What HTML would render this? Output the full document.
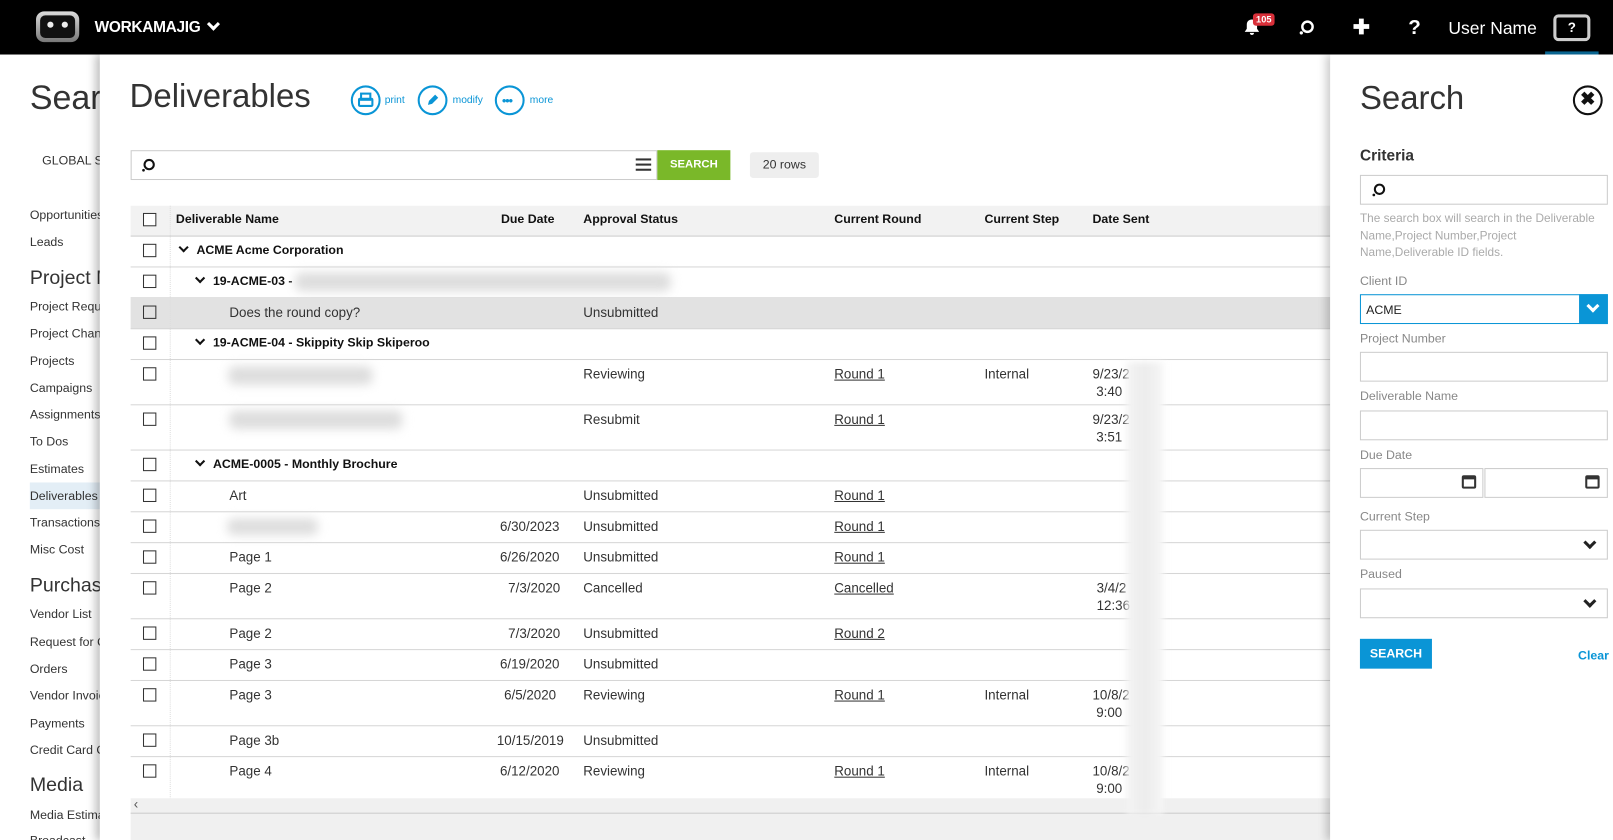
<!DOCTYPE html>
<html><head><meta charset="utf-8"><style>
*{box-sizing:border-box;margin:0;padding:0}
body{width:1613px;height:840px;overflow:hidden;background:#fff;font-family:"Liberation Sans",sans-serif;color:#333}
#w{position:absolute;left:0;top:0;width:1568px;height:817px;transform:scale(1.0287);transform-origin:0 0;overflow:hidden}
.a{position:absolute;white-space:nowrap}
.top{position:absolute;left:0;top:0;width:1568px;height:53px;background:#000}
.lt{font-size:12px;color:#333}
.lh{font-size:19px;color:#333}
.main{position:absolute;left:97px;top:53px;width:1196px;height:764px;background:#fff;box-shadow:-4px 0 8px rgba(0,0,0,.25)}
.rp{position:absolute;left:1293px;top:53px;width:275px;height:764px;background:#fff;box-shadow:-4px 0 8px rgba(0,0,0,.2)}
.row{position:absolute;left:127px;width:1166px;border-bottom:1px solid #d6d6d6;font-size:13px}
.cb{position:absolute;left:12px;top:7px;width:13px;height:13px;border:1.5px solid #333;background:#fff}
.t{position:absolute;top:6px;white-space:nowrap}
.b{font-weight:bold;font-size:12px;color:#111}
.u{text-decoration:underline}
.chev{display:inline-block;width:7px;height:7px;border-right:2.5px solid #111;border-bottom:2.5px solid #111;transform:rotate(45deg);margin-right:9px;position:relative;top:-3px}
.blur{position:absolute;background:#ddd;filter:blur(5px);border-radius:6px}
.lbl{position:absolute;left:1322px;font-size:12px;color:#888}
.inp{position:absolute;left:1322px;width:241px;height:29px;border:1px solid #ccc;background:#fff}
.ic{position:absolute;width:29px;height:29px;border:2px solid #0a95d6;border-radius:50%}
.icl{position:absolute;font-size:10px;color:#0a95d6}
.dd{position:absolute;right:12px;top:7px;width:9px;height:9px;border-right:3px solid #222;border-bottom:3px solid #222;transform:rotate(45deg)}
</style></head><body><div id="w">
<div class="top">
 <div class="a" style="left:35px;top:11px;width:42px;height:30px;border-radius:8px;background:linear-gradient(#ddd,#777);"></div>
 <div class="a" style="left:39px;top:15px;width:34px;height:22px;border-radius:5px;background:#111"></div>
 <div class="a" style="left:46px;top:21px;width:6px;height:6px;border-radius:50%;background:#eee"></div>
 <div class="a" style="left:60px;top:21px;width:6px;height:6px;border-radius:50%;background:#eee"></div>
 <div class="a" style="left:92px;top:18px;color:#fff;font-weight:bold;font-size:15px;letter-spacing:-0.3px">WORKAMAJIG</div>
 <div class="a" style="left:203px;top:19px;width:9px;height:9px;border-right:3px solid #fff;border-bottom:3px solid #fff;transform:rotate(45deg)"></div>
 <svg class="a" style="left:1207px;top:17px" width="20" height="20" viewBox="0 0 20 20"><path d="M10 2c-3 0-5 2-5 5v4l-2 3h14l-2-3V7c0-3-2-5-5-5zM8 15a2 2 0 0 0 4 0z" fill="#fff"/></svg>
 <div class="a" style="left:1218px;top:13px;background:#d9303a;color:#fff;font-size:9px;font-weight:bold;padding:0 3px;border-radius:3px;line-height:12px">105</div>
 <svg class="a" style="left:1261px;top:18px" width="18" height="18" viewBox="0 0 18 18"><circle cx="10" cy="8" r="5" fill="none" stroke="#fff" stroke-width="2.4"/><circle cx="4" cy="14" r="1.6" fill="#fff"/></svg>
 <div class="a" style="left:1315px;top:19px;width:16px;height:16px;color:#fff;font-size:20px;font-weight:bold;line-height:16px">✚</div>
 <div class="a" style="left:1369px;top:16px;color:#fff;font-size:20px;font-weight:bold">?</div>
 <div class="a" style="left:1408px;top:18px;color:#fff;font-size:17px">User Name</div>
 <div class="a" style="left:1510px;top:14px;width:36px;height:26px;border:3px solid #ccc;border-radius:5px;color:#fff;font-size:13px;font-weight:bold;text-align:center;line-height:19px">?</div>
 <div class="a" style="left:1502px;top:50px;width:52px;height:3px;background:#0a6e9c"></div>
</div>
<div class="a" style="left:29px;top:76px;font-size:33px;color:#333">Search</div>
<div class="a lt" style="left:41px;top:149px">GLOBAL SEARCH</div>
<div class="a lt" style="left:29px;top:202px">Opportunities</div>
<div class="a lt" style="left:29px;top:228px">Leads</div>
<div class="a lh" style="left:29px;top:260px">Project Management</div>
<div class="a lt" style="left:29px;top:291px">Project Requests</div>
<div class="a lt" style="left:29px;top:317px">Project Changes</div>
<div class="a lt" style="left:29px;top:344px">Projects</div>
<div class="a lt" style="left:29px;top:370px">Campaigns</div>
<div class="a lt" style="left:29px;top:396px">Assignments</div>
<div class="a lt" style="left:29px;top:422px">To Dos</div>
<div class="a lt" style="left:29px;top:449px">Estimates</div>
<div class="a" style="left:29px;top:469px;width:70px;height:26px;background:#e3eef6"></div>
<div class="a lt" style="left:29px;top:475px">Deliverables</div>
<div class="a lt" style="left:29px;top:501px">Transactions</div>
<div class="a lt" style="left:29px;top:527px">Misc Cost</div>
<div class="a lh" style="left:29px;top:559px">Purchasing</div>
<div class="a lt" style="left:29px;top:590px">Vendor List</div>
<div class="a lt" style="left:29px;top:617px">Request for Quote</div>
<div class="a lt" style="left:29px;top:643px">Orders</div>
<div class="a lt" style="left:29px;top:669px">Vendor Invoices</div>
<div class="a lt" style="left:29px;top:696px">Payments</div>
<div class="a lt" style="left:29px;top:722px">Credit Card Charges</div>
<div class="a lh" style="left:29px;top:753px">Media</div>
<div class="a lt" style="left:29px;top:785px">Media Estimates</div>
<div class="a lt" style="left:29px;top:810px">Broadcast</div>
<div class="main"></div>
<div class="a" style="left:126px;top:75px;font-size:32px;color:#333">Deliverables</div>
<div class="ic" style="left:341px;top:83px"></div><svg class="a" style="left:347px;top:89px" width="17" height="17" viewBox="0 0 17 17"><rect x="4" y="2" width="9" height="6" fill="none" stroke="#0a95d6" stroke-width="2"/><rect x="2" y="7" width="13" height="7" rx="1" fill="none" stroke="#0a95d6" stroke-width="2"/></svg>
<div class="icl" style="left:374px;top:92px">print</div>
<div class="ic" style="left:406px;top:83px"></div><svg class="a" style="left:412px;top:89px" width="17" height="17" viewBox="0 0 17 17"><path d="M4 13l1-4 6-6 3 3-6 6z" fill="#0a95d6"/></svg>
<div class="icl" style="left:440px;top:92px">modify</div>
<div class="ic" style="left:481px;top:83px"></div><div class="a" style="left:488px;top:91px;color:#0a95d6;font-size:12px;font-weight:bold;letter-spacing:-1px">•••</div>
<div class="icl" style="left:515px;top:92px">more</div>
<div class="a" style="left:127px;top:146px;width:512px;height:29px;border:1px solid #ccc;background:#fff"></div>
<svg class="a" style="left:135px;top:152px" width="17" height="17" viewBox="0 0 17 17"><circle cx="10" cy="8" r="4.5" fill="none" stroke="#111" stroke-width="2"/><circle cx="4.5" cy="13.5" r="1.3" fill="#111"/></svg>
<div class="a" style="left:618px;top:154px;width:15px;height:2px;background:#333;box-shadow:0 5px 0 #333,0 10px 0 #333"></div>
<div class="a" style="left:639px;top:146px;width:71px;height:29px;background:#7ab829;color:#fff;font-size:11px;font-weight:bold;text-align:center;line-height:29px">SEARCH</div>
<div class="a" style="left:729px;top:148px;width:67px;height:25px;background:#eee;border-radius:3px;font-size:12px;text-align:center;line-height:25px">20 rows</div>
<div class="row" style="top:200px;height:30px;background:#f2f2f2;border-bottom:1px solid #ccc"><div class="cb"></div><div class="t b" style="left:44px">Deliverable Name</div><div class="t b" style="left:360px">Due Date</div><div class="t b" style="left:440px">Approval Status</div><div class="t b" style="left:684px">Current Round</div><div class="t b" style="left:830px">Current Step</div><div class="t b" style="left:935px">Date Sent</div></div>
<div class="row" style="top:230px;height:30px"><div class="cb"></div><div class="t b" style="left:48px"><span class="chev"></span>ACME Acme Corporation</div></div>
<div class="row" style="top:260px;height:30px"><div class="cb"></div><div class="t b" style="left:64px"><span class="chev"></span>19-ACME-03 -</div><div class="blur" style="left:160px;top:5px;width:365px;height:18px"></div></div>
<div class="row" style="top:290px;height:30px;background:#e2e2e2"><div class="cb" style="background:#e2e2e2"></div><div class="t" style="left:96px">Does the round copy?</div><div class="t" style="left:440px">Unsubmitted</div></div>
<div class="row" style="top:320px;height:30px"><div class="cb"></div><div class="t b" style="left:64px"><span class="chev"></span>19-ACME-04 - Skippity Skip Skiperoo</div></div>
<div class="row" style="top:350px;height:44px"><div class="cb"></div><div class="blur" style="left:95px;top:6px;width:140px;height:18px"></div><div class="t" style="left:440px">Reviewing</div><div class="t u" style="left:684px">Round 1</div><div class="t" style="left:830px">Internal</div><div class="t" style="left:935px;line-height:17px;top:5px">9/23/2<br>&nbsp;3:40</div></div>
<div class="row" style="top:394px;height:44px"><div class="cb"></div><div class="blur" style="left:96px;top:5px;width:168px;height:18px"></div><div class="t" style="left:440px">Resubmit</div><div class="t u" style="left:684px">Round 1</div><div class="t" style="left:935px;line-height:17px;top:5px">9/23/2<br>&nbsp;3:51</div></div>
<div class="row" style="top:438px;height:30px"><div class="cb"></div><div class="t b" style="left:64px"><span class="chev"></span>ACME-0005 - Monthly Brochure</div></div>
<div class="row" style="top:468px;height:30px"><div class="cb"></div><div class="t" style="left:96px">Art</div><div class="t" style="left:440px">Unsubmitted</div><div class="t u" style="left:684px">Round 1</div></div>
<div class="row" style="top:498px;height:30px"><div class="cb"></div><div class="blur" style="left:94px;top:6px;width:88px;height:16px"></div><div class="t" style="left:359px">6/30/2023</div><div class="t" style="left:440px">Unsubmitted</div><div class="t u" style="left:684px">Round 1</div></div>
<div class="row" style="top:528px;height:30px"><div class="cb"></div><div class="t" style="left:96px">Page 1</div><div class="t" style="left:359px">6/26/2020</div><div class="t" style="left:440px">Unsubmitted</div><div class="t u" style="left:684px">Round 1</div></div>
<div class="row" style="top:558px;height:44px"><div class="cb"></div><div class="t" style="left:96px">Page 2</div><div class="t" style="left:367px">7/3/2020</div><div class="t" style="left:440px">Cancelled</div><div class="t u" style="left:684px">Cancelled</div><div class="t" style="left:939px;line-height:17px;top:5px">3/4/2<br>12:36</div></div>
<div class="row" style="top:602px;height:30px"><div class="cb"></div><div class="t" style="left:96px">Page 2</div><div class="t" style="left:367px">7/3/2020</div><div class="t" style="left:440px">Unsubmitted</div><div class="t u" style="left:684px">Round 2</div></div>
<div class="row" style="top:632px;height:30px"><div class="cb"></div><div class="t" style="left:96px">Page 3</div><div class="t" style="left:359px">6/19/2020</div><div class="t" style="left:440px">Unsubmitted</div></div>
<div class="row" style="top:662px;height:44px"><div class="cb"></div><div class="t" style="left:96px">Page 3</div><div class="t" style="left:363px">6/5/2020</div><div class="t" style="left:440px">Reviewing</div><div class="t u" style="left:684px">Round 1</div><div class="t" style="left:830px">Internal</div><div class="t" style="left:935px;line-height:17px;top:5px">10/8/2<br>&nbsp;9:00</div></div>
<div class="row" style="top:706px;height:30px"><div class="cb"></div><div class="t" style="left:96px">Page 3b</div><div class="t" style="left:356px">10/15/2019</div><div class="t" style="left:440px">Unsubmitted</div></div>
<div class="row" style="top:736px;height:40px;border:none"><div class="cb"></div><div class="t" style="left:96px">Page 4</div><div class="t" style="left:359px">6/12/2020</div><div class="t" style="left:440px">Reviewing</div><div class="t u" style="left:684px">Round 1</div><div class="t" style="left:830px">Internal</div><div class="t" style="left:935px;line-height:17px;top:5px">10/8/2<br>&nbsp;9:00</div></div>
<div class="a" style="left:165px;top:200px;height:617px;border-left:1px dotted #ddd"></div>
<div class="a" style="left:127px;top:776px;width:1166px;height:41px;background:#f0f0f0"></div>
<div class="a" style="left:127px;top:790px;width:1166px;border-top:1px solid #ccc"></div>
<div class="a" style="left:130px;top:774px;font-size:13px;color:#555">‹</div>
<div class="a" style="left:1095px;top:352px;width:36px;height:440px;background:linear-gradient(90deg,#f4f4f4,#ececec,#f6f6f6);filter:blur(3px)"></div>
<div class="rp"></div>
<div class="a" style="left:1322px;top:77px;font-size:32px;color:#333">Search</div>
<div class="a" style="left:1529px;top:83px;width:29px;height:29px;border:2.5px solid #111;border-radius:50%;text-align:center;font-size:18px;font-weight:bold;line-height:23px;color:#111">✖</div>
<div class="a" style="left:1322px;top:143px;font-size:15px;font-weight:bold;color:#333">Criteria</div>
<div class="inp" style="top:170px"></div>
<svg class="a" style="left:1331px;top:176px" width="17" height="17" viewBox="0 0 17 17"><circle cx="10" cy="8" r="4.5" fill="none" stroke="#111" stroke-width="2"/><circle cx="4.5" cy="13.5" r="1.3" fill="#111"/></svg>
<div class="a" style="left:1322px;top:205px;font-size:11.5px;color:#aaa;line-height:16.5px;white-space:normal;width:242px">The search box will search in the Deliverable Name,Project Number,Project Name,Deliverable ID fields.</div>
<div class="lbl" style="top:266px">Client ID</div>
<div class="inp" style="top:286px;border-color:#0a95d6;font-size:12px;color:#222;padding:7px 5px">ACME</div>
<div class="a" style="left:1535px;top:286px;width:28px;height:29px;background:#0a95d6"></div>
<div class="a" style="left:1544px;top:293px;width:9px;height:9px;border-right:3px solid #fff;border-bottom:3px solid #fff;transform:rotate(45deg)"></div>
<div class="lbl" style="top:322px">Project Number</div>
<div class="inp" style="top:342px"></div>
<div class="lbl" style="top:378px">Deliverable Name</div>
<div class="inp" style="top:399px"></div>
<div class="lbl" style="top:435px">Due Date</div>
<div class="inp" style="top:455px;width:120px"></div>
<div class="inp" style="top:455px;left:1443px;width:120px"></div>
<div class="a" style="left:1421px;top:462px;width:14px;height:13px;border:2px solid #333;border-radius:2px;border-top-width:4px"></div>
<div class="a" style="left:1541px;top:462px;width:14px;height:13px;border:2px solid #333;border-radius:2px;border-top-width:4px"></div>
<div class="lbl" style="top:495px">Current Step</div>
<div class="inp" style="top:515px"><div class="dd"></div></div>
<div class="lbl" style="top:551px">Paused</div>
<div class="inp" style="top:572px"><div class="dd"></div></div>
<div class="a" style="left:1322px;top:621px;width:70px;height:29px;background:#0a95d6;color:#fff;font-size:12px;font-weight:bold;text-align:center;line-height:29px">SEARCH</div>
<div class="a" style="left:1534px;top:630px;font-size:12px;color:#0a95d6;font-weight:bold">Clear</div>
</div></body></html>
